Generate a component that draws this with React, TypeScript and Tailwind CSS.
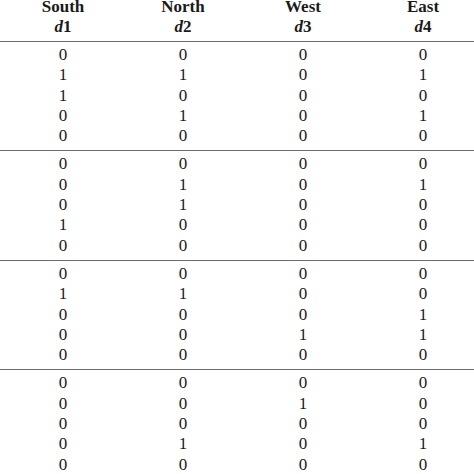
const header = [
  { name: "South", sub: "1" },
  { name: "North", sub: "2" },
  { name: "West", sub: "3" },
  { name: "East", sub: "4" },
];

const groups: number[][][] = [
  [
    [0, 0, 0, 0],
    [1, 1, 0, 1],
    [1, 0, 0, 0],
    [0, 1, 0, 1],
    [0, 0, 0, 0],
  ],
  [
    [0, 0, 0, 0],
    [0, 1, 0, 1],
    [0, 1, 0, 0],
    [1, 0, 0, 0],
    [0, 0, 0, 0],
  ],
  [
    [0, 0, 0, 0],
    [1, 1, 0, 0],
    [0, 0, 0, 1],
    [0, 0, 1, 1],
    [0, 0, 0, 0],
  ],
  [
    [0, 0, 0, 0],
    [0, 0, 1, 0],
    [0, 0, 0, 0],
    [0, 1, 0, 1],
    [0, 0, 0, 0],
  ],
];

export default function App() {
  return (
    <div
      className="w-[474px] h-[474px] overflow-hidden bg-white text-[#1a1a1a] text-[17px]"
      style={{ fontFamily: '"Liberation Serif", "DejaVu Serif", serif' }}
    >
      <div className="-mt-[3px] pb-[4px] ml-[3px] grid grid-cols-[120px_120px_120px_120px] leading-[20px] font-bold">
        {header.map((h) => (
          <div key={h.name} className="flex flex-col items-center">
            <span>{h.name}</span>
            <span>
              <i>d</i>
              {h.sub}
            </span>
          </div>
        ))}
      </div>
      {groups.map((rows, gi) => (
        <div key={gi} className="border-t-[1.5px] border-[#6b6b6b] pt-[3px] pb-[4px]">
          {rows.map((row, ri) => (
            <div
              key={ri}
              className="ml-[3px] grid grid-cols-[120px_120px_120px_120px] leading-[20.3px]"
            >
              {row.map((v, ci) => (
                <div key={ci} className="text-center">
                  {v}
                </div>
              ))}
            </div>
          ))}
        </div>
      ))}
    </div>
  );
}
